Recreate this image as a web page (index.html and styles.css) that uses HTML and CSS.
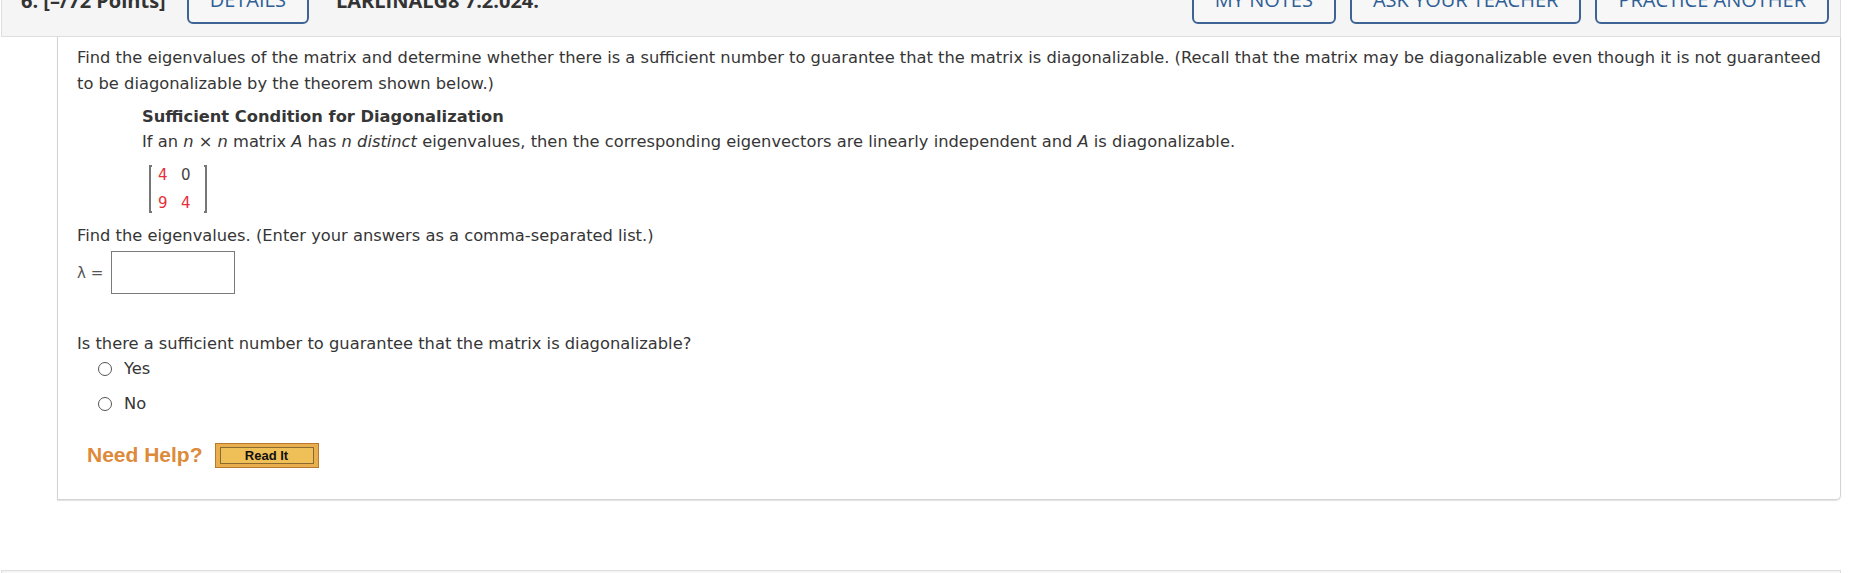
FILE: index.html
```html
<!DOCTYPE html>
<html>
<head>
<meta charset="utf-8">
<link rel="stylesheet" href="styles.css">
</head>
<body>
<div class="page">
  <div class="qhead">
    <div class="qnum">6. [–/72 Points]</div>
    <button class="hbtn">DETAILS</button>
    <div class="qid">LARLINALG8 7.2.024.</div>
    <div class="spacer"></div>
    <button class="hbtn">MY NOTES</button>
    <button class="hbtn">ASK YOUR TEACHER</button>
    <button class="hbtn">PRACTICE ANOTHER</button>
  </div>
  <div class="card">
    <p class="intro">Find the eigenvalues of the matrix and determine whether there is a sufficient number to guarantee that the matrix is diagonalizable. (Recall that the matrix may be diagonalizable even though it is not guaranteed to be diagonalizable by the theorem shown below.)</p>
    <div class="theorem">
      <div class="thtitle">Sufficient Condition for Diagonalization</div>
      <div class="thtext">If an <i>n</i> × <i>n</i> matrix <i>A</i> has <i>n distinct</i> eigenvalues, then the corresponding eigenvectors are linearly independent and <i>A</i> is diagonalizable.</div>
      <div class="matrix">
        <span class="br br-l"></span>
        <div class="cells">
          <span class="red">4</span><span class="dark">0</span>
          <span class="red">9</span><span class="red">4</span>
        </div>
        <span class="br br-r"></span>
      </div>
    </div>
    <p class="q1">Find the eigenvalues. (Enter your answers as a comma-separated list.)</p>
    <div class="answer">
      <span class="lam">λ =</span>
      <span class="inbox"></span>
    </div>
    <p class="q2">Is there a sufficient number to guarantee that the matrix is diagonalizable?</p>
    <div class="opts">
      <label class="opt"><span class="radio"></span>Yes</label>
      <label class="opt"><span class="radio"></span>No</label>
    </div>
    <div class="help">
      <span class="needhelp">Need Help?</span>
      <span class="readit"><span class="readit-in">Read It</span></span>
    </div>
  </div>
  <div class="nexthead"></div>
</div>
</body>
</html>
```

FILE: styles.css
```css
html, body {
  margin: 0;
  padding: 0;
  background: #fff;
  overflow: hidden;
}
.page {
  width: 1840px;
  margin-left: 1px;
  margin-top: -24px;
  font-family: "DejaVu Sans", Verdana, sans-serif;
  color: #363636;
  font-size: 16.3px;
}
.qhead {
  display: flex;
  align-items: center;
  background: #f5f5f5;
  border: 1px solid #dedede;
  border-top: none;
  padding: 0 11px 12px 19px;
  font-family: "Open Sans", sans-serif;
}
.qnum {
  font-weight: 700;
  font-size: 20px;
  color: #333;
  margin-right: 21px;
}
.qid {
  font-weight: 700;
  font-size: 20px;
  color: #333;
  margin-left: 27px;
}
.spacer { flex: 1; }
.hbtn {
  font-family: "Open Sans", sans-serif;
  font-size: 20px;
  line-height: 24px;
  height: 48px;
  color: #2f5f95;
  background: #f7f7f7;
  border: 2px solid #3d6494;
  border-radius: 6px;
  padding: 10px 21px;
  margin-left: 14px;
}
.qhead .hbtn:first-of-type { margin-left: 0; }
.card {
  margin-left: 56px;
  border: 1px solid #d4d4d4;
  border-top: none;
  border-radius: 0 0 5px 0;
  box-shadow: 0 1px 1px rgba(0,0,0,0.12);
  padding: 8px 19px 31px 19px;
  line-height: 26px;
}
.intro {
  margin: 0;
}
.theorem {
  margin: 7px 0 0 65px;
  line-height: 25px;
}
.thtitle {
  font-weight: 700;
}
.matrix {
  display: flex;
  align-items: stretch;
  margin: 11px 0 0 7px;
  height: 48px;
  width: 58px;
}
.br {
  width: 5px;
  border: 2px solid #777;
}
.br-l { border-right: none; }
.br-r { border-left: none; }
.cells {
  display: grid;
  grid-template-columns: 23px 23px;
  grid-template-rows: 20px 20px;
  row-gap: 8px;
  align-content: center;
  font-size: 15px;
  line-height: 20px;
  padding: 0 0 0 6px;
}
.red { color: #e5303a; }
.dark { color: #444; }
.q1 {
  margin: 10px 0 0 0;
}
.answer {
  display: flex;
  align-items: center;
  margin-top: 2px;
}
.lam {
  font-size: 15px;
  color: #555;
  margin-right: 8px;
}
.inbox {
  width: 122px;
  height: 41px;
  border: 1px solid #7a7a7a;
}
.q2 {
  margin: 37px 0 0 0;
}
.opts {
  margin-left: 20px;
  display: flex;
  flex-direction: column;
  gap: 11px;
  line-height: 24px;
}
.opt {
  display: flex;
  align-items: center;
}
.radio {
  width: 12px;
  height: 12px;
  border: 1px solid #555;
  border-radius: 50%;
  margin: 0 12px 0 1px;
}
.help {
  display: flex;
  align-items: center;
  margin: 26px 0 0 10px;
}
.needhelp {
  font-family: "Liberation Sans", Arial, sans-serif;
  font-weight: 700;
  font-size: 21px;
  color: #dd8a3a;
  margin-right: 12px;
}
.readit {
  display: inline-block;
  border: 1px solid #b8792f;
  background: #e9ae4e;
  padding: 3px 4px;
}
.readit-in {
  display: block;
  width: 92px;
  height: 15px;
  line-height: 15px;
  background: #f0c058;
  border: 1px solid #8a6a30;
  text-align: center;
  font-family: "Liberation Sans", Arial, sans-serif;
  font-weight: 700;
  font-size: 13px;
  color: #111;
}
.nexthead {
  margin-top: 70px;
  height: 20px;
  background: #f5f5f5;
  border: 1px solid #dedede;
  border-bottom: none;
}
```
